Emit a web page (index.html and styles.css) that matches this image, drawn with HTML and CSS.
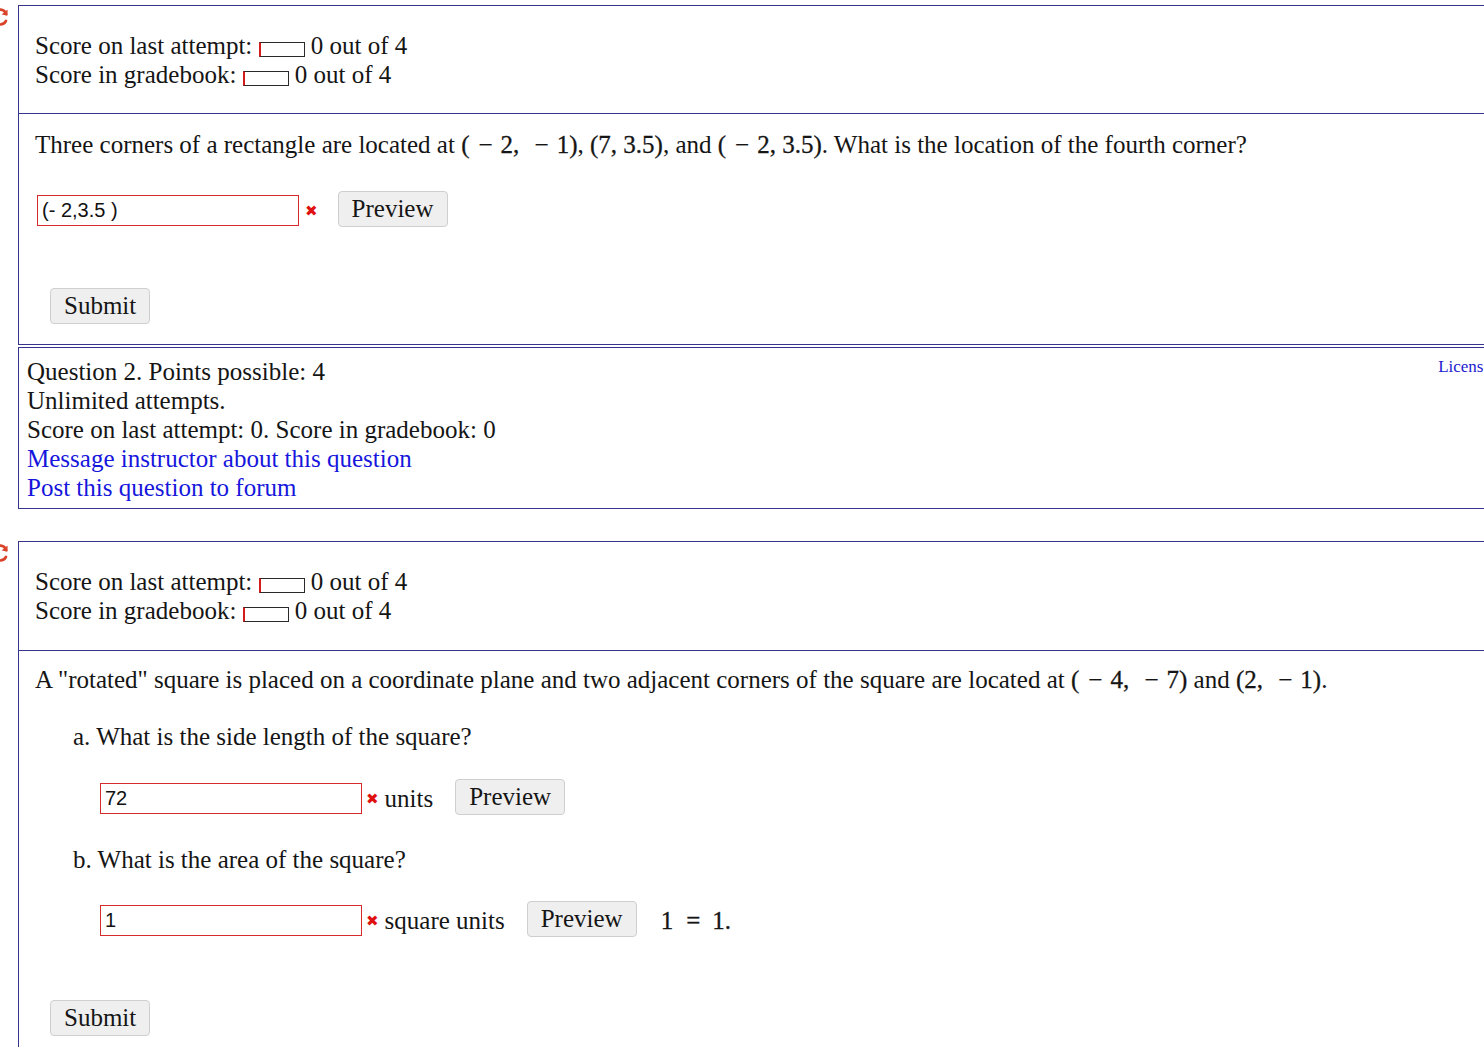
FILE: index.html
```html
<!DOCTYPE html>
<html lang="en">
<head>
<meta charset="utf-8">
<title>Questions</title>
<link rel="stylesheet" href="styles.css">
</head>
<body>
<div class="page">

  <div class="qrow">
    <div class="gutter">
      <svg class="reload" viewBox="0 0 20 20" width="20" height="20" aria-hidden="true">
        <path d="M16.2 7.2A6.6 6.6 0 0 0 4 6.2" fill="none" stroke="#d8432a" stroke-width="2.6" stroke-linecap="round"/>
        <path d="M17.6 2.6 L17.4 8.6 L11.6 7.6 Z" fill="#d8432a"/>
        <path d="M3.8 12.8A6.6 6.6 0 0 0 16 13.8" fill="none" stroke="#d8432a" stroke-width="2.6" stroke-linecap="round"/>
        <path d="M2.4 17.4 L2.6 11.4 L8.4 12.4 Z" fill="#d8432a"/>
      </svg>
    </div>
    <div class="qbox">
      <div class="scores">
        <div>Score on last attempt: <span class="bar"></span> 0 out of 4</div>
        <div>Score in gradebook: <span class="bar"></span> 0 out of 4</div>
      </div>
      <div class="qbody">
        <p class="qtext">Three corners of a rectangle are located at <span class="math">(<span class="op">−</span>2, <span class="op">−</span>1)</span>, <span class="math">(7, 3.5)</span>, and <span class="math">(<span class="op">−</span>2, 3.5)</span>. What is the location of the fourth corner?</p>
        <div class="ansrow top-row">
          <input class="ans" type="text" value="(- 2,3.5 )">
          <span class="wrong">✖</span>
          <button class="btn preview" type="button">Preview</button>
        </div>
        <button class="btn submit" type="button">Submit</button>
      </div>
    </div>
  </div>

  <div class="info">
    <a class="license" href="#">License</a>
    <div>Question 2. Points possible: 4</div>
    <div>Unlimited attempts.</div>
    <div>Score on last attempt: 0. Score in gradebook: 0</div>
    <div><a class="link" href="#">Message instructor about this question</a></div>
    <div><a class="link" href="#">Post this question to forum</a></div>
  </div>

  <div class="qrow second">
    <div class="gutter">
      <svg class="reload" viewBox="0 0 20 20" width="20" height="20" aria-hidden="true">
        <path d="M16.2 7.2A6.6 6.6 0 0 0 4 6.2" fill="none" stroke="#d8432a" stroke-width="2.6" stroke-linecap="round"/>
        <path d="M17.6 2.6 L17.4 8.6 L11.6 7.6 Z" fill="#d8432a"/>
        <path d="M3.8 12.8A6.6 6.6 0 0 0 16 13.8" fill="none" stroke="#d8432a" stroke-width="2.6" stroke-linecap="round"/>
        <path d="M2.4 17.4 L2.6 11.4 L8.4 12.4 Z" fill="#d8432a"/>
      </svg>
    </div>
    <div class="qbox">
      <div class="scores">
        <div>Score on last attempt: <span class="bar"></span> 0 out of 4</div>
        <div>Score in gradebook: <span class="bar"></span> 0 out of 4</div>
      </div>
      <div class="qbody">
        <p class="qtext">A "rotated" square is placed on a coordinate plane and two adjacent corners of the square are located at <span class="math">(<span class="op">−</span>4, <span class="op">−</span>7)</span> and <span class="math">(2, <span class="op">−</span>1)</span>.</p>
        <div class="part">
          <div class="plabel">a. What is the side length of the square?</div>
          <div class="ansrow sub">
            <input class="ans" type="text" value="72">
            <span class="wrong tight">✖</span>
            <span class="unit">units</span>
            <button class="btn preview" type="button">Preview</button>
          </div>
          <div class="plabel second-label">b. What is the area of the square?</div>
          <div class="ansrow sub second-row">
            <input class="ans" type="text" value="1">
            <span class="wrong tight">✖</span>
            <span class="unit">square units</span>
            <button class="btn preview" type="button">Preview</button>
            <span class="math result">1<span class="eq">=</span>1.</span>
          </div>
        </div>
        <button class="btn submit last" type="button">Submit</button>
      </div>
    </div>
  </div>

</div>
</body>
</html>
```

FILE: styles.css
```css
html, body {
  margin: 0;
  padding: 0;
  overflow: hidden;
  background: #ffffff;
}

body {
  font-family: "Liberation Serif", "Times New Roman", serif;
  font-size: 25px;
  line-height: 29px;
  color: #151515;
}

.page {
  width: 1500px;
  padding-top: 5px;
}

.qrow {
  display: flex;
  align-items: flex-start;
}

.qrow.second {
  margin-top: 32px;
}

.gutter {
  width: 18px;
  flex: none;
}

.reload {
  display: block;
  width: 20px;
  height: 20px;
  margin-left: -10px;
  margin-top: 2px;
}

.qbox {
  width: 1480px;
  border: 1px solid #35358f;
}

.scores {
  padding: 25px 16px 24px 16px;
  border-bottom: 1px solid #35358f;
}

.qrow.second .scores {
  padding-bottom: 25px;
}

.bar {
  display: inline-block;
  box-sizing: border-box;
  width: 46px;
  height: 15px;
  border: 1px solid #2a2a2a;
  border-left: 2px solid #d41c1c;
  vertical-align: -3px;
}

.qbody {
  padding: 16px 16px 20px 16px;
}

.qrow.second .qbody {
  padding-top: 14px;
}

.qtext {
  margin: 0;
}

.math {
  font-size: 25px;
  -webkit-text-stroke: 0.3px #151515;
}

.op {
  margin: 0 8px 0 9px;
}

.ansrow {
  display: flex;
  align-items: flex-end;
  height: 36px;
}

.top-row {
  margin-top: 32px;
  padding-left: 2px;
}

.ans {
  box-sizing: border-box;
  width: 262px;
  height: 31px;
  margin: 0 0 1px 0;
  padding: 0 4px;
  border: 1px solid #d62b2b;
  font-family: "Liberation Sans", Arial, sans-serif;
  font-size: 20px;
  color: #111;
  background: #fff;
  outline: none;
}

.wrong {
  align-self: center;
  margin-left: 6px;
  margin-top: 4px;
  font-family: "DejaVu Sans", sans-serif;
  font-size: 15px;
  line-height: 15px;
  color: #e01010;
}

.wrong.tight {
  margin-left: 4px;
}

.unit {
  align-self: center;
  margin-left: 6px;
  margin-top: 3px;
}

.btn {
  box-sizing: border-box;
  height: 36px;
  padding: 0 13px;
  border: 1px solid #cfcfcf;
  border-radius: 4px;
  background: #efefef;
  font-family: "Liberation Serif", "Times New Roman", serif;
  font-size: 25px;
  color: #151515;
  line-height: 34px;
}

.preview {
  margin-left: 22px;
}

.top-row .preview {
  margin-left: 20px;
}

.submit {
  display: block;
  margin-top: 61px;
  margin-left: 15px;
}

.submit.last {
  margin-top: 63px;
}

.part {
  padding-left: 38px;
}

.plabel {
  margin-top: 28px;
}

.plabel.second-label {
  margin-top: 30px;
}

.ansrow.sub {
  margin-top: 28px;
  padding-left: 27px;
}

.ansrow.sub.second-row {
  margin-top: 27px;
}

.result {
  align-self: center;
  margin-left: 24px;
  margin-top: 3px;
}

.eq {
  margin: 0 12px 0 13px;
}

.info {
  margin-top: 2px;
  margin-left: 18px;
  width: 1464px;
  padding: 9px 8px 6px 8px;
  border: 1px solid #35358f;
}

.license {
  float: right;
  font-size: 17px;
  line-height: 20px;
  color: #2020d0;
  text-decoration: none;
}

.link {
  color: #1616dc;
  text-decoration: none;
}
```
